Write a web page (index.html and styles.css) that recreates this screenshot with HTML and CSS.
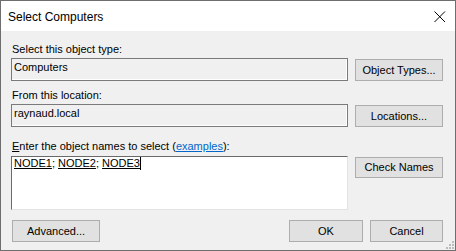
FILE: index.html
```html
<!DOCTYPE html>
<html>
<head>
<meta charset="utf-8">
<link rel="stylesheet" href="styles.css">
</head>
<body>
<div class="window">
  <div class="titlebar">
    <span class="title">Select Computers</span>
    <svg class="close" width="12" height="12" viewBox="0 0 12 12"><path d="M0.5 0.5 L11 11 M11 0.5 L0.5 11" stroke="#000" stroke-width="1" fill="none"/></svg>
  </div>
  <div class="content">
    <div class="label">Select this object type:</div>
    <div class="row">
      <div class="box ro">Computers</div>
      <div class="btn side">Object Types...</div>
    </div>
    <div class="label l2">From this location:</div>
    <div class="row">
      <div class="box ro">raynaud.local</div>
      <div class="btn side">Locations...</div>
    </div>
    <div class="label l3"><u>E</u>nter the object names to select (<a class="link">examples</a>):</div>
    <div class="row">
      <div class="box multi"><u>NODE1</u>; <u>NODE2</u>; <u>NODE3</u><span class="caret"></span></div>
      <div class="btn side check">Check Names</div>
    </div>
    <div class="footer">
      <div class="btn adv">Advanced...</div>
      <div class="spacer"></div>
      <div class="btn ok">OK</div>
      <div class="btn cancel">Cancel</div>
    </div>
    <svg class="grip" width="8" height="8" viewBox="0 0 8 8">
      <rect x="6" y="0" width="2" height="2" fill="#bcbcbc"/>
      <rect x="3" y="3" width="2" height="2" fill="#bcbcbc"/>
      <rect x="6" y="3" width="2" height="2" fill="#bcbcbc"/>
      <rect x="0" y="6" width="2" height="2" fill="#bcbcbc"/>
      <rect x="3" y="6" width="2" height="2" fill="#bcbcbc"/>
      <rect x="6" y="6" width="2" height="2" fill="#bcbcbc"/>
    </svg>
  </div>
</div>
</body>
</html>
```

FILE: styles.css
```css
html, body {
  margin: 0;
  padding: 0;
  background: #f0f0f0;
}
body {
  font-family: "Liberation Sans", Arial, sans-serif;
  font-size: 11px;
  line-height: 13px;
  color: #000;
}
.window {
  width: 456px;
  height: 251px;
  box-sizing: border-box;
  border: 1px solid #6e6e6e;
  display: flex;
  flex-direction: column;
  background: #f0f0f0;
}
.titlebar {
  height: 30px;
  background: #fff;
  display: flex;
  align-items: center;
  padding-left: 7px;
  padding-right: 9px;
  flex-shrink: 0;
}
.title {
  font-size: 12px;
  line-height: 14px;
  flex: 1;
  margin-top: 1px;
}
.close {
  display: block;
  margin-top: 1px;
}
.content {
  position: relative;
  flex: 1;
  padding: 12px 12px 0 10px;
  display: flex;
  flex-direction: column;
}
.label {
  height: 13px;
  margin-left: 1px;
  white-space: nowrap;
}
.l2 { margin-top: 8px; }
.l3 { margin-top: 13px; }
.label u { text-decoration: underline; }
.link {
  color: #0066cc;
  text-decoration: underline;
}
.row {
  display: flex;
  gap: 7px;
  margin-top: 2px;
  align-items: flex-start;
}
.l3 + .row { margin-top: 3px; }
.box {
  width: 337px;
  height: 23px;
  box-sizing: border-box;
  padding: 2px 2px 0 2px;
  white-space: nowrap;
}
.ro {
  border: 1px solid #7a7a7a;
  box-shadow: inset -1px -1px 0 #ffffff;
  background: #f0f0f0;
}
.multi {
  height: 54px;
  background: #fff;
  border: 1px solid;
  border-color: #6a6a6a #e3e3e3 #e3e3e3 #6a6a6a;
  padding: 0 2px;
}
.multi u { text-decoration: underline; }
.caret {
  display: inline-block;
  width: 0;
  height: 13px;
  border-left: 1px solid #000;
  vertical-align: top;
}
.btn {
  box-sizing: border-box;
  height: 22px;
  background: #e1e1e1;
  border: 1px solid #adadad;
  display: flex;
  align-items: center;
  justify-content: center;
  white-space: nowrap;
}
.side {
  width: 88px;
  margin-top: 1px;
}
.check {
  height: 21px;
}
.footer {
  display: flex;
  margin-top: 10px;
  gap: 7px;
}
.adv {
  width: 88px;
  margin-left: 1px;
}
.spacer { flex: 1; }
.ok { width: 74px; }
.cancel { width: 73px; }
.grip {
  position: absolute;
  right: 1px;
  bottom: 1px;
}
```
